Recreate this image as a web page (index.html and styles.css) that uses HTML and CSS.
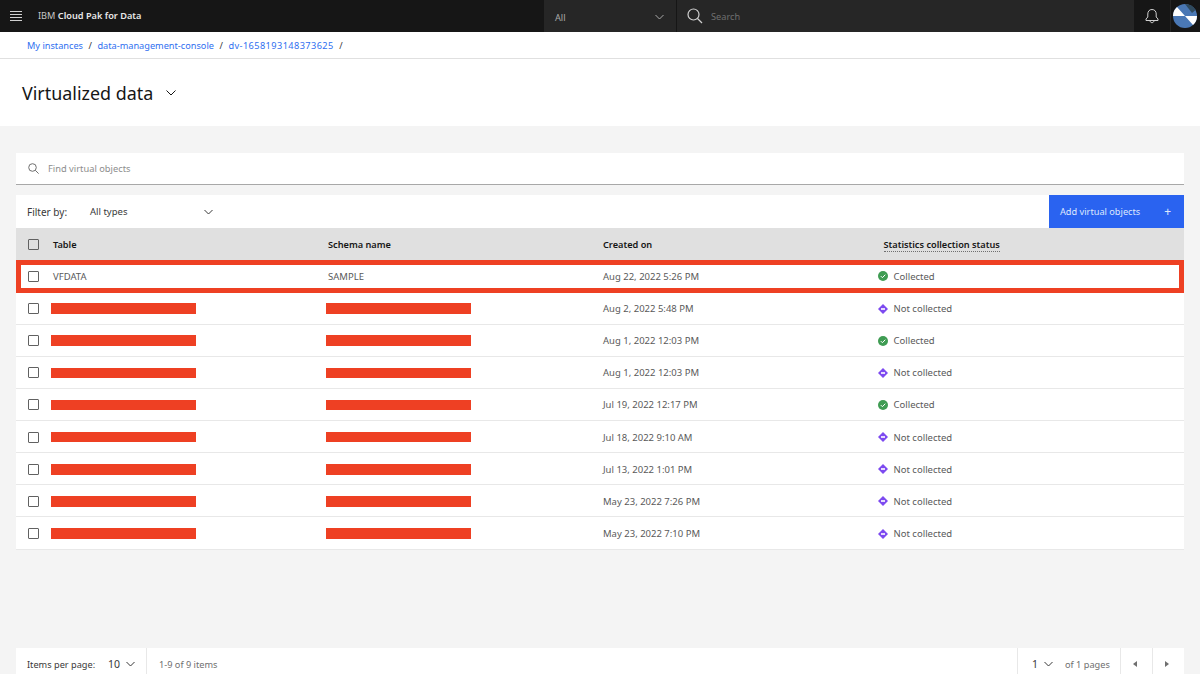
FILE: index.html
```html
<!DOCTYPE html>
<html lang="en">
<head>
<meta charset="UTF-8">
<meta name="viewport" content="width=device-width, initial-scale=1.0">
<title>Virtualized data</title>
<link rel="stylesheet" href="styles.css">
</head>
<body>
<header class="topbar">
    <button class="menu-btn" aria-label="Menu">
        <svg width="12" height="10" viewBox="0 0 12 10"><path d="M0 .5h12M0 3.5h12M0 6.5h12M0 9.5h12" stroke="#d0d0d0" stroke-width="1"/></svg>
    </button>
    <div class="brand">IBM <b>Cloud Pak for Data</b></div>
    <div class="global-search">
        <div class="scope">
            <span>All</span>
            <svg width="9" height="6" viewBox="0 0 9 6"><path d="M.5 1l4 4 4-4" fill="none" stroke="#a8a8a8"/></svg>
        </div>
        <div class="search-field">
            <svg width="16" height="16" viewBox="0 0 16 16"><circle cx="6.500" cy="6.500" r="5.500" fill="none" stroke="#d0d0d0" stroke-width="1.200"/><path d="M10.500 10.500l4.500 4.500" stroke="#d0d0d0" stroke-width="1.200"/></svg>
            <span>Search</span>
        </div>
    </div>
    <div class="bell">
        <svg width="14" height="16" viewBox="0 0 14 16"><path d="M7 1.500c-2.800 0-4.200 2-4.200 4.500v3L1 11v1.500h12V11l-1.800-2V6c0-2.500-1.400-4.500-4.200-4.500zM5 12.500c0 1.300.8 2.200 2 2.200s2-.9 2-2.200" fill="none" stroke="#d0d0d0" stroke-width="1"/></svg>
    </div>
    <div class="avatar">
        <svg width="24" height="24" viewBox="0 0 24 24">
            <circle cx="12" cy="12" r="12" fill="#4a78b5"/>
            <path d="M12 0A12 12 0 0 1 22.500 6L19 9z" fill="#2f4a5e"/>
            <path d="M4 3L12 12H0A12 12 0 0 1 4 3zM12 12H24A12 12 0 0 1 20 21z" fill="#fff"/>
        </svg>
    </div>
</header>

<nav class="breadcrumb">
    <a>My instances</a><span>/</span>
    <a>data-management-console</a><span>/</span>
    <a class="instance-id">dv-1658193148373625</a><span>/</span>
</nav>

<div class="page-title">
    <h1>Virtualized data</h1>
    <svg width="10" height="6" viewBox="0 0 10 6"><path d="M.5.5L5 5 9.500.5" fill="none" stroke="#161616"/></svg>
</div>

<main class="content">
    <div class="find-bar">
        <svg width="11" height="11" viewBox="0 0 11 11"><circle cx="4.500" cy="4.500" r="3.800" fill="none" stroke="#6f6f6f"/><path d="M7.300 7.300l3.300 3.300" stroke="#6f6f6f"/></svg>
        <span>Find virtual objects</span>
    </div>

    <div class="toolbar">
        <span class="filter-label">Filter by:</span>
        <div class="filter-select">
            <span>All types</span>
            <svg width="9" height="6" viewBox="0 0 9 6"><path d="M.5 1l4 4 4-4" fill="none" stroke="#393939"/></svg>
        </div>
        <button class="add-btn"><span>Add virtual objects</span><span class="plus">+</span></button>
    </div>

    <div class="table">
        <div class="row head">
            <div class="check"><i class="box"></i></div>
            <div>Table</div>
            <div>Schema name</div>
            <div>Created on</div>
            <div><span class="dotted">Statistics collection status</span></div>
        </div>
        <div class="row marked">
            <div class="check"><i class="box"></i></div>
            <div>VFDATA</div>
            <div>SAMPLE</div>
            <div>Aug 22, 2022 5:26 PM</div>
            <div class="status"><svg class="ok" viewBox="0 0 10 10"><circle cx="5" cy="5" r="5" fill="#3f9c53"/><path d="M2.800 5.100l1.600 1.600 2.900-3" fill="none" stroke="#fff"/></svg>Collected</div>
        </div>
        <div class="row">
            <div class="check"><i class="box"></i></div>
            <div><i class="redact"></i></div>
            <div><i class="redact"></i></div>
            <div>Aug 2, 2022 5:48 PM</div>
            <div class="status"><svg class="no" viewBox="0 0 10 10"><path d="M5 0l5 5-5 5-5-5z" fill="#7d4af0"/><path d="M3 5h4" stroke="#fff" stroke-width="1.600"/></svg>Not collected</div>
        </div>
        <div class="row">
            <div class="check"><i class="box"></i></div>
            <div><i class="redact"></i></div>
            <div><i class="redact"></i></div>
            <div>Aug 1, 2022 12:03 PM</div>
            <div class="status"><svg class="ok" viewBox="0 0 10 10"><circle cx="5" cy="5" r="5" fill="#3f9c53"/><path d="M2.800 5.100l1.600 1.600 2.900-3" fill="none" stroke="#fff"/></svg>Collected</div>
        </div>
        <div class="row">
            <div class="check"><i class="box"></i></div>
            <div><i class="redact"></i></div>
            <div><i class="redact"></i></div>
            <div>Aug 1, 2022 12:03 PM</div>
            <div class="status"><svg class="no" viewBox="0 0 10 10"><path d="M5 0l5 5-5 5-5-5z" fill="#7d4af0"/><path d="M3 5h4" stroke="#fff" stroke-width="1.600"/></svg>Not collected</div>
        </div>
        <div class="row">
            <div class="check"><i class="box"></i></div>
            <div><i class="redact"></i></div>
            <div><i class="redact"></i></div>
            <div>Jul 19, 2022 12:17 PM</div>
            <div class="status"><svg class="ok" viewBox="0 0 10 10"><circle cx="5" cy="5" r="5" fill="#3f9c53"/><path d="M2.800 5.100l1.600 1.600 2.900-3" fill="none" stroke="#fff"/></svg>Collected</div>
        </div>
        <div class="row">
            <div class="check"><i class="box"></i></div>
            <div><i class="redact"></i></div>
            <div><i class="redact"></i></div>
            <div>Jul 18, 2022 9:10 AM</div>
            <div class="status"><svg class="no" viewBox="0 0 10 10"><path d="M5 0l5 5-5 5-5-5z" fill="#7d4af0"/><path d="M3 5h4" stroke="#fff" stroke-width="1.600"/></svg>Not collected</div>
        </div>
        <div class="row">
            <div class="check"><i class="box"></i></div>
            <div><i class="redact"></i></div>
            <div><i class="redact"></i></div>
            <div>Jul 13, 2022 1:01 PM</div>
            <div class="status"><svg class="no" viewBox="0 0 10 10"><path d="M5 0l5 5-5 5-5-5z" fill="#7d4af0"/><path d="M3 5h4" stroke="#fff" stroke-width="1.600"/></svg>Not collected</div>
        </div>
        <div class="row">
            <div class="check"><i class="box"></i></div>
            <div><i class="redact"></i></div>
            <div><i class="redact"></i></div>
            <div>May 23, 2022 7:26 PM</div>
            <div class="status"><svg class="no" viewBox="0 0 10 10"><path d="M5 0l5 5-5 5-5-5z" fill="#7d4af0"/><path d="M3 5h4" stroke="#fff" stroke-width="1.600"/></svg>Not collected</div>
        </div>
        <div class="row">
            <div class="check"><i class="box"></i></div>
            <div><i class="redact"></i></div>
            <div><i class="redact"></i></div>
            <div>May 23, 2022 7:10 PM</div>
            <div class="status"><svg class="no" viewBox="0 0 10 10"><path d="M5 0l5 5-5 5-5-5z" fill="#7d4af0"/><path d="M3 5h4" stroke="#fff" stroke-width="1.600"/></svg>Not collected</div>
        </div>
    </div>

    <footer class="pager">
        <div class="pager-left">
            <span class="per-page">Items per page:</span>
            <span class="num">10</span>
            <svg width="9" height="6" viewBox="0 0 9 6"><path d="M.5 1l4 4 4-4" fill="none" stroke="#393939"/></svg>
        </div>
        <div class="pager-count">1-9 of 9 items</div>
        <div class="pager-pages">
            <span class="num">1</span>
            <svg width="9" height="6" viewBox="0 0 9 6"><path d="M.5 1l4 4 4-4" fill="none" stroke="#393939"/></svg>
            <span class="of">of 1 pages</span>
        </div>
        <div class="pager-arrow"><svg width="4" height="6" viewBox="0 0 4 6"><path d="M4 0v6L0 3z" fill="#6f6f6f"/></svg></div>
        <div class="pager-arrow"><svg width="4" height="6" viewBox="0 0 4 6"><path d="M0 0v6l4-3z" fill="#6f6f6f"/></svg></div>
    </footer>
</main>
</body>
</html>
```

FILE: styles.css
```css
* {
    box-sizing: border-box;
}

html, body {
    height: 674px;
    margin: 0;
    overflow: hidden;
}

body {
    display: flex;
    flex-direction: column;
    font-family: "Noto Sans", "Open Sans", sans-serif;
    font-size: 9.5px;
    background-color: #f4f4f4;
    color: #5a5a5a;
}

/* top bar */
.topbar {
    display: flex;
    align-items: stretch;
    height: 32px;
    background-color: #161616;
    color: #f4f4f4;
}

.menu-btn {
    width: 32px;
    padding: 0 0 0 10px;
    display: flex;
    align-items: center;
    border: none;
    background: none;
}

.brand {
    width: 512px;
    padding-left: 6px;
    line-height: 32px;
    font-size: 9.2px;
    color: #c6c6c6;
}

.brand b {
    font-weight: 600;
    color: #e8e8e8;
}

.global-search {
    flex: 1;
    display: flex;
    background-color: #262626;
}

.scope {
    width: 133px;
    padding: 2px 12px 0 11px;
    display: flex;
    align-items: center;
    justify-content: space-between;
    border-right: 1px solid #161616;
    font-size: 9.2px;
    color: #a8a8a8;
}

.search-field {
    display: flex;
    align-items: center;
    gap: 8px;
    padding-left: 10px;
    font-size: 9.2px;
    color: #6f6f6f;
}

.bell {
    width: 36px;
    display: flex;
    align-items: center;
    justify-content: center;
}

.avatar {
    width: 30px;
    padding-right: 2px;
    display: flex;
    align-items: center;
    justify-content: center;
    border-left: 1px solid #262626;
}

/* breadcrumb and title */
.breadcrumb {
    height: 27px;
    padding-left: 27px;
    display: flex;
    align-items: center;
    gap: 5.500px;
    background-color: #fff;
    border-bottom: 1px solid #e0e0e0;
    font-size: 9.2px;
    color: #393939;
}

.breadcrumb a {
    color: #2f6ff0;
}

.breadcrumb .instance-id {
    letter-spacing: .42px;
}

.page-title {
    height: 67px;
    padding-left: 22px;
    display: flex;
    align-items: center;
    gap: 13px;
    background-color: #fff;
}

.page-title h1 {
    margin: 0;
    font-size: 17.900px;
    font-weight: 400;
    color: #161616;
}

/* main content */
.content {
    flex: 1;
    padding: 27px 16px 0;
    display: flex;
    flex-direction: column;
}

.find-bar {
    height: 32px;
    padding-left: 12px;
    display: flex;
    align-items: center;
    gap: 9px;
    background-color: #fff;
    border-bottom: 1px solid #a8a8a8;
    font-size: 9.300px;
    color: #8d8d8d;
}

.toolbar {
    height: 33px;
    margin-top: 10px;
    padding-left: 11px;
    display: flex;
    align-items: center;
    background-color: #fff;
    color: #393939;
}

.filter-label {
    width: 63px;
    font-size: 10px;
}

.filter-select {
    width: 123px;
    display: flex;
    align-items: center;
    justify-content: space-between;
}

.add-btn {
    margin-left: auto;
    width: 135px;
    height: 33px;
    padding: 0 13px 0 11px;
    display: flex;
    align-items: center;
    justify-content: space-between;
    border: none;
    background-color: #2a63f0;
    color: #dfe8fd;
    font: inherit;
    font-size: 9.200px;
}

.plus {
    font-size: 12px;
}

/* table */
.row {
    display: grid;
    grid-template-columns: 37px 275px 275px 275px 1fr;
    align-items: center;
    height: 32.150px;
    padding-top: 1px;
    background-color: #fff;
    border-bottom: 1px solid #e8e8e8;
}

.row.head {
    height: 32px;
    padding-top: 0;
    background-color: #e0e0e0;
    border-bottom: none;
    font-size: 9.200px;
    font-weight: 600;
    color: #161616;
}

.row.marked {
    height: 32.500px;
    padding-top: 0;
    border: 5px solid #ee4023;
    grid-template-columns: 32px 275px 275px 275px 1fr;
}

.check {
    padding-left: 12px;
    display: flex;
}

.marked .check {
    padding-left: 7px;
}

.box {
    width: 11px;
    height: 11px;
    border: 1px solid #616161;
    border-radius: 1px;
}

.redact {
    display: block;
    width: 145px;
    height: 10.500px;
    margin-left: -2px;
    background-color: #ee4023;
}

.dotted {
    margin-left: 5.500px;
    border-bottom: 1px dotted #6f6f6f;
}

.status {
    display: flex;
    align-items: center;
    gap: 5.500px;
}

.status svg {
    width: 10px;
    height: 10px;
}

/* pagination, cut off by the bottom of the window */
.pager {
    height: 32px;
    margin-top: auto;
    margin-bottom: -6px;
    flex-shrink: 0;
    display: flex;
    align-items: center;
    background-color: #fff;
    font-size: 9.200px;
    color: #393939;
}

.pager > div {
    height: 100%;
    display: flex;
    align-items: center;
}

.pager-left {
    width: 131px;
    padding-left: 11px;
    border-right: 1px solid #e8e8e8;
}

.per-page {
    width: 81px;
}

.num {
    font-size: 10.500px;
    margin-right: 6px;
}

.pager-count {
    flex: 1;
    padding-left: 12px;
    color: #6f6f6f;
}

.pager-pages {
    width: 103px;
    padding-left: 14px;
    border-left: 1px solid #e8e8e8;
}

.of {
    margin-left: 12px;
    color: #6f6f6f;
}

.pager-arrow {
    width: 32px;
    padding-right: 3px;
    justify-content: center;
    border-left: 1px solid #e8e8e8;
}
```
